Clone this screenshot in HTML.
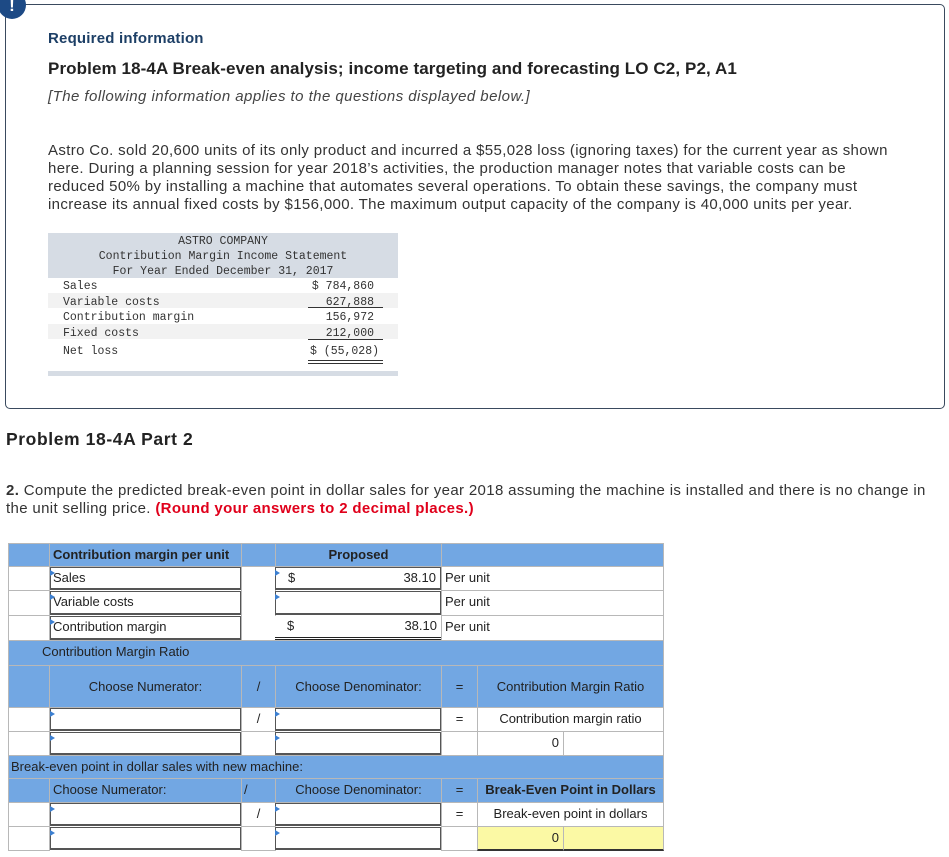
<!DOCTYPE html>
<html><head><meta charset="utf-8">
<style>
body{margin:0;width:949px;height:857px;background:#fff;font-family:"Liberation Sans",sans-serif;color:#333;position:relative;overflow:hidden}
.a{position:absolute}
.box{left:5px;top:4px;width:938px;height:403px;border:1px solid #3a4a5e;border-radius:5px}
.ex{left:-2px;top:-9px;width:28px;height:28px;border-radius:50%;background:#1d4a85;color:#fff;font-weight:bold;font-size:17px;text-align:center;line-height:30px}
.p{font-size:15px;letter-spacing:0.35px;line-height:18px;color:#333;white-space:nowrap}
.mono{font-family:"Liberation Mono",monospace;font-size:11.5px;color:#333}
.c{position:absolute;box-sizing:border-box;border:1px solid #b8b8b8;font-size:13px;line-height:22px;color:#222;white-space:nowrap}
.b{background:#72a7e3}
.w{background:#fff}
.in{position:absolute;box-sizing:border-box;border:1px solid #555;border-bottom:2px solid #555;background:#fff;font-size:13px;line-height:20px;color:#222;padding-left:2px;white-space:nowrap}
.in:before{content:"";position:absolute;left:-1px;top:-1px;border-left:5px solid #3c7fd0;border-top:3px solid transparent;border-bottom:3px solid transparent;transform:translateY(3px)}
.tri:before{display:none}
</style></head><body>
<div class="a box"></div>
<div class="a ex">!</div>
<div class="a" style="left:48px;top:30px;font-size:15px;letter-spacing:0.2px;font-weight:bold;color:#1d3f66">Required information</div>
<div class="a" style="left:48px;top:59px;font-size:17px;letter-spacing:0.1px;font-weight:bold;color:#222;white-space:nowrap">Problem 18-4A Break-even analysis; income targeting and forecasting LO C2, P2, A1</div>
<div class="a" style="left:48px;top:88px;font-size:15px;letter-spacing:0.45px;font-style:italic;color:#444;white-space:nowrap">[The following information applies to the questions displayed below.]</div>
<div class="a p" style="left:48px;top:142px">Astro Co. sold 20,600 units of its only product and incurred a $55,028 loss (ignoring taxes) for the current year as shown<br>here. During a planning session for year 2018’s activities, the production manager notes that variable costs can be<br>reduced 50% by installing a machine that automates several operations. To obtain these savings, the company must<br>increase its annual fixed costs by $156,000. The maximum output capacity of the company is 40,000 units per year.</div>

<div class="a" style="left:48px;top:233px;width:350px;height:45px;background:#d6dce4"></div>
<div class="a mono" style="left:48px;top:234px;width:350px;text-align:center;line-height:15px">ASTRO COMPANY<br>Contribution Margin Income Statement<br>For Year Ended December 31, 2017</div>
<div class="a" style="left:48px;top:293px;width:350px;height:15px;background:#f2f2f2"></div>
<div class="a" style="left:48px;top:324px;width:350px;height:15px;background:#f2f2f2"></div>
<div class="a" style="left:48px;top:371px;width:350px;height:5px;background:#d6dce4"></div>
<div class="a mono" style="left:63px;top:279px;line-height:15.5px">Sales<br>Variable costs<br>Contribution margin<br>Fixed costs</div>
<div class="a mono" style="left:63px;top:345px">Net loss</div>
<div class="a mono" style="left:308px;top:279px;width:66px;text-align:right;line-height:15.5px">$ 784,860<br>627,888<br>156,972<br>212,000</div>
<div class="a" style="left:308px;top:307px;width:75px;border-top:1px solid #333"></div>
<div class="a" style="left:308px;top:339px;width:75px;border-top:1px solid #333"></div>
<div class="a mono" style="left:310px;top:345px">$ (55,028)</div>
<div class="a" style="left:308px;top:360px;width:75px;height:2px;border-top:1px solid #333;border-bottom:1px solid #333"></div>

<div class="a" style="left:6px;top:429px;font-size:17.5px;letter-spacing:0.6px;font-weight:bold;color:#222">Problem 18-4A Part 2</div>
<div class="a p" style="left:6px;top:482px"><b>2.</b> Compute the predicted break-even point in dollar sales for year 2018 assuming the machine is installed and there is no change in<br>the unit selling price. <b style="color:#e0001b">(Round your answers to 2 decimal places.)</b></div>

<!-- table -->
<div class="c b" style="left:8px;top:543px;width:656px;height:24px"></div>
<div class="c b" style="left:49px;top:543px;width:193px;height:24px;padding-left:3px;font-weight:bold">Contribution margin per unit</div>
<div class="c b" style="left:241px;top:543px;width:35px;height:24px"></div>
<div class="c b" style="left:275px;top:543px;width:167px;height:24px;text-align:center;font-weight:bold">Proposed</div>
<div class="c w" style="left:8px;top:566px;width:656px;height:75px"></div>
<div class="c w" style="left:8px;top:566px;width:42px;height:25px"></div>
<div class="c w" style="left:8px;top:590px;width:42px;height:26px"></div>
<div class="c w" style="left:8px;top:615px;width:42px;height:26px"></div>
<div class="c w" style="left:241px;top:566px;width:35px;height:75px"></div>
<div class="c w" style="left:441px;top:566px;width:223px;height:25px;padding-left:3px">Per unit</div>
<div class="c w" style="left:441px;top:590px;width:223px;height:26px;padding-left:3px">Per unit</div>
<div class="c w" style="left:441px;top:615px;width:223px;height:26px;padding-left:3px">Per unit</div>
<div class="in" style="left:50px;top:567px;width:191px;height:23px">Sales</div>
<div class="in" style="left:50px;top:591px;width:191px;height:24px">Variable costs</div>
<div class="in" style="left:50px;top:616px;width:191px;height:24px">Contribution margin</div>
<div class="in" style="left:275px;top:567px;width:166px;height:23px;padding-left:12px">$<span style="position:absolute;right:4px">38.10</span></div>
<div class="in" style="left:275px;top:591px;width:166px;height:24px"></div>
<div class="in tri" style="left:275px;top:616px;width:166px;height:24px;padding-left:12px;border:none;border-bottom:3px double #222">$<span style="position:absolute;right:4px">38.10</span></div>
<div class="c b" style="left:8px;top:640px;width:656px;height:26px;padding-left:33px">Contribution Margin Ratio</div>
<div class="c b" style="left:8px;top:665px;width:42px;height:43px"></div>
<div class="c b" style="left:49px;top:665px;width:193px;height:43px;line-height:41px;text-align:center">Choose Numerator:</div>
<div class="c b" style="left:241px;top:665px;width:35px;height:43px;line-height:41px;text-align:center">/</div>
<div class="c b" style="left:275px;top:665px;width:167px;height:43px;line-height:41px;text-align:center">Choose Denominator:</div>
<div class="c b" style="left:441px;top:665px;width:37px;height:43px;line-height:41px;text-align:center">=</div>
<div class="c b" style="left:477px;top:665px;width:187px;height:43px;line-height:41px;text-align:center">Contribution Margin Ratio</div>
<div class="c w" style="left:8px;top:707px;width:42px;height:25px"></div>
<div class="c w" style="left:8px;top:731px;width:42px;height:25px"></div>
<div class="c w" style="left:241px;top:707px;width:35px;height:25px;text-align:center">/</div>
<div class="c w" style="left:241px;top:731px;width:35px;height:25px"></div>
<div class="c w" style="left:441px;top:707px;width:37px;height:25px;text-align:center">=</div>
<div class="c w" style="left:441px;top:731px;width:37px;height:25px"></div>
<div class="c w" style="left:477px;top:707px;width:187px;height:25px;text-align:center">Contribution margin ratio</div>
<div class="c w" style="left:477px;top:731px;width:187px;height:25px"></div>
<div class="c w" style="left:477px;top:731px;width:87px;height:25px;text-align:right;padding-right:4px">0</div>
<div class="in" style="left:50px;top:708px;width:191px;height:23px"></div>
<div class="in" style="left:50px;top:732px;width:191px;height:23px"></div>
<div class="in" style="left:275px;top:708px;width:166px;height:23px"></div>
<div class="in" style="left:275px;top:732px;width:166px;height:23px"></div>
<div class="c b" style="left:8px;top:755px;width:656px;height:24px;padding-left:2px">Break-even point in dollar sales with new machine:</div>
<div class="c b" style="left:8px;top:778px;width:42px;height:25px"></div>
<div class="c b" style="left:49px;top:778px;width:193px;height:25px;padding-left:3px">Choose Numerator:</div>
<div class="c b" style="left:241px;top:778px;width:35px;height:25px;padding-left:2px">/</div>
<div class="c b" style="left:275px;top:778px;width:167px;height:25px;text-align:center">Choose Denominator:</div>
<div class="c b" style="left:441px;top:778px;width:37px;height:25px;text-align:center">=</div>
<div class="c b" style="left:477px;top:778px;width:187px;height:25px;text-align:center;font-weight:bold">Break-Even Point in Dollars</div>
<div class="c w" style="left:8px;top:802px;width:42px;height:25px"></div>
<div class="c w" style="left:8px;top:826px;width:42px;height:25px"></div>
<div class="c w" style="left:241px;top:802px;width:35px;height:25px;text-align:center">/</div>
<div class="c w" style="left:241px;top:826px;width:35px;height:25px"></div>
<div class="c w" style="left:441px;top:802px;width:37px;height:25px;text-align:center">=</div>
<div class="c w" style="left:441px;top:826px;width:37px;height:25px"></div>
<div class="c w" style="left:477px;top:802px;width:187px;height:25px;text-align:center">Break-even point in dollars</div>
<div class="c" style="left:477px;top:826px;width:187px;height:25px;background:#fbf9a4;border-bottom:2px solid #333"></div>
<div class="c" style="left:477px;top:826px;width:87px;height:25px;background:#fbf9a4;text-align:right;padding-right:4px;border-bottom:2px solid #333">0</div>
<div class="in" style="left:50px;top:803px;width:191px;height:23px"></div>
<div class="in" style="left:50px;top:827px;width:191px;height:23px"></div>
<div class="in" style="left:275px;top:803px;width:166px;height:23px"></div>
<div class="in" style="left:275px;top:827px;width:166px;height:23px"></div>
</body></html>
